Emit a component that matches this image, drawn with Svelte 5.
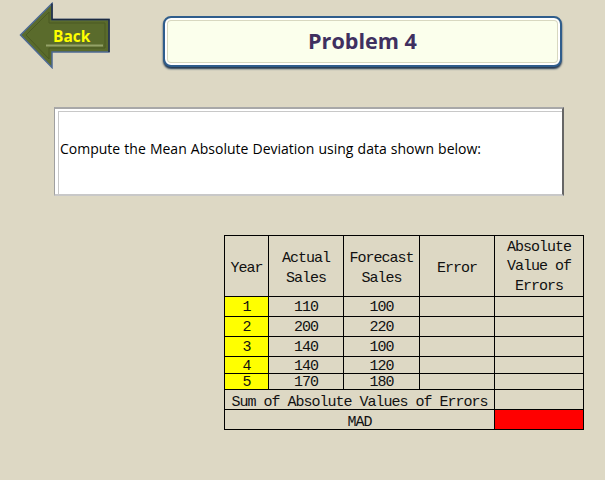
<script>
    const rows = [
        { year: 1, actual: 110, forecast: 100, h: 20 },
        { year: 2, actual: 200, forecast: 220, h: 20 },
        { year: 3, actual: 140, forecast: 100, h: 20 },
        { year: 4, actual: 140, forecast: 120, h: 17 },
        { year: 5, actual: 170, forecast: 180, h: 16 },
    ];
</script>

<div class="page">
    <header>
        <svg class="back" width="92" height="67" viewBox="19 2 92 67">
            <path d="M20.5 35 L52 3.5 V19.5 H109 V52 H52 V67.5 Z" fill="#5a6b2c" stroke="#4d6a94" stroke-width="1.5" />
            <path d="M52 3.5 V19.5 H109 V52" fill="none" stroke="#1c2a40" stroke-width="1.5" />
            <path d="M26 35 L49 12 V23 H105 V48 H49 V59 Z" fill="none" stroke="#4a5a22" stroke-width="1" />
            <path d="M46 45.5 H103" stroke="#94a268" stroke-width="2" />
            <text x="53" y="41.5" class="back-label">Back</text>
        </svg>
        <div class="title"><h1>Problem 4</h1></div>
    </header>

    <div class="question">
        <p>Compute the Mean Absolute Deviation using data shown below:</p>
    </div>

    <table>
        <colgroup>
            <col style="width: 44px" />
            <col style="width: 75px" />
            <col style="width: 76px" />
            <col style="width: 75px" />
            <col style="width: 89px" />
        </colgroup>
        <thead>
            <tr class="head">
                <th>Year</th>
                <th>Actual<br />Sales</th>
                <th>Forecast<br />Sales</th>
                <th>Error</th>
                <th class="tall">Absolute<br />Value of<br />Errors</th>
            </tr>
        </thead>
        <tbody>
            {#each rows as row}
                <tr style="height: {row.h}px">
                    <td class="year">{row.year}</td>
                    <td>{row.actual}</td>
                    <td>{row.forecast}</td>
                    <td></td>
                    <td></td>
                </tr>
            {/each}
            <tr class="sum">
                <td colspan="4">Sum of Absolute Values of Errors</td>
                <td></td>
            </tr>
            <tr class="sum">
                <td colspan="4">MAD</td>
                <td class="mad"></td>
            </tr>
        </tbody>
    </table>
</div>

<style>
    :global(body) {
        background: #ddd8c4;
    }
    .page {
        height: 480px;
        overflow: hidden;
        box-sizing: border-box;
        padding-top: 2px;
    }
    header {
        display: flex;
        align-items: flex-start;
        padding-left: 19px;
    }
    .back {
        display: block;
        flex: none;
    }
    .back-label {
        font-family: "Open Sans", sans-serif;
        font-size: 15.5px;
        font-weight: 700;
        fill: #ffff00;
    }
    .title {
        box-sizing: border-box;
        width: 399px;
        height: 51px;
        margin: 14px 0 0 52px;
        padding-bottom: 3px;
        display: flex;
        align-items: center;
        justify-content: center;
        background: #fbffec;
        border: 2px solid #2f5d8c;
        border-radius: 8px;
        box-shadow: inset 0 0 0 2px #fff, inset 0 0 0 3px #d8d8c0, 0 2px 2px #1f3550;
    }
    h1 {
        margin: 0;
        font-family: "Open Sans", sans-serif;
        font-size: 21.6px;
        font-weight: 700;
        color: #3f3060;
    }
    .question {
        box-sizing: border-box;
        width: 510px;
        height: 89px;
        margin: 38px 0 0 54px;
        background: #fff;
        border-style: solid;
        border-width: 2px 2px 2px 1px;
        border-color: #a8a8a8 #666 #c8c8c8 #a0a0a0;
        box-shadow: inset 3px 2px 0 #fff, inset 4px 3px 0 #c8c8c8;
        display: flex;
        align-items: center;
    }
    p {
        margin: 0 0 6px 5px;
        font-family: "Open Sans", sans-serif;
        font-size: 14px;
        word-spacing: 0.5px;
        color: #000;
    }
    table {
        margin: 39px 0 0 224px;
        width: 360px;
        table-layout: fixed;
        border-collapse: collapse;
        font-family: "Liberation Mono", monospace;
        font-size: 15px;
        letter-spacing: -1px;
        color: #111;
    }
    th,
    td {
        border: 1px solid #000;
        padding: 0;
        text-align: center;
        font-weight: 400;
    }
    th {
        padding-top: 6px;
        line-height: 20px;
    }
    th.tall {
        padding-top: 2px;
        line-height: 19.3px;
    }
    .head {
        height: 61px;
    }
    tbody td {
        padding-top: 3px;
        line-height: 12px;
    }
    .year {
        background: #ffff00;
    }
    .sum {
        height: 20px;
    }
    .sum td {
        padding-top: 7px;
    }
    .mad {
        background: #ff0000;
    }
</style>
